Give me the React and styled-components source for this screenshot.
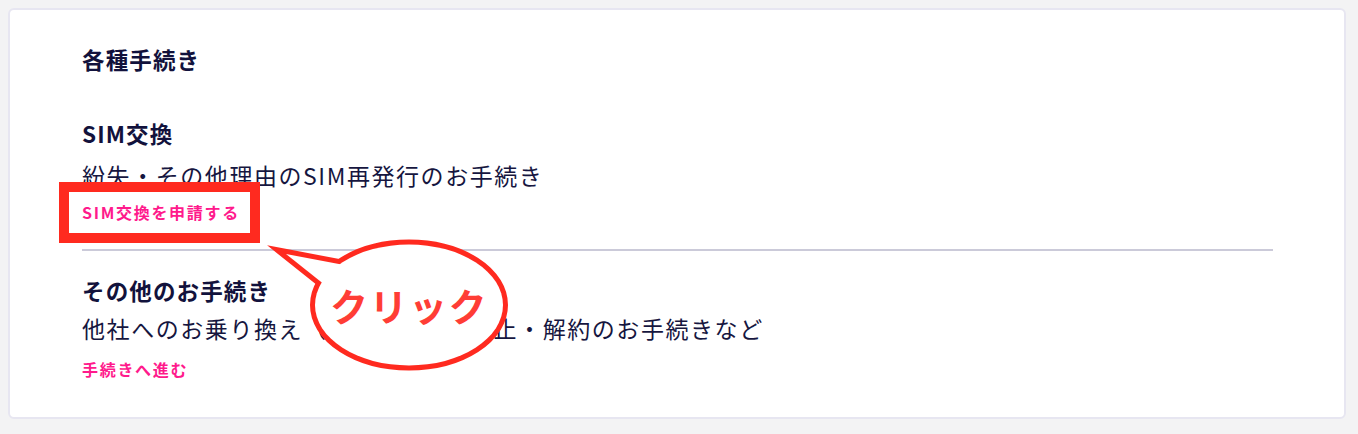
import React from "react";
import styled, { createGlobalStyle } from "styled-components";

const GlobalStyle = createGlobalStyle`
  html, body { margin: 0; padding: 0; }
  body {
    background: #f3f3f4;
    font-family: "Noto Sans CJK JP", "Noto Sans", sans-serif;
    color: #13133d;
  }
`;

const Page = styled.div`
  height: 434px;
  padding: 8px 12px 0 8px;
  box-sizing: border-box;
`;

const Card = styled.section`
  position: relative;
  height: 411px;
  box-sizing: border-box;
  background: #ffffff;
  border: 2px solid #e7e6f1;
  border-radius: 6px;
  padding: 34px 71px 0 72px;
`;

const Title = styled.h2`
  margin: 0;
  font-size: 22.5px;
  font-weight: 700;
  line-height: 31px;
  letter-spacing: 0.05em;
  color: #12123c;
`;

const Section = styled.div`
  margin-top: ${(p) => p.$top}px;
`;

const SectionTitle = styled.h3`
  margin: 0;
  font-size: 22.5px;
  font-weight: 700;
  line-height: 30px;
  letter-spacing: 0.05em;
  color: #12123c;
`;

const Desc = styled.p`
  margin: ${(p) => p.$gap}px 0 0;
  font-size: 23px;
  font-weight: 400;
  line-height: 36px;
  letter-spacing: 0.068em;
  color: #16163f;
`;

const Link = styled.a`
  display: block;
  margin-top: ${(p) => p.$gap}px;
  font-size: 16px;
  font-weight: 700;
  line-height: 24px;
  letter-spacing: 1.7px;
  color: #ff1a8c;
  text-decoration: none;
`;

const Divider = styled.hr`
  margin: 25px 0 0;
  border: 0;
  height: 2px;
  background: #cbcad9;
`;

const RedBox = styled.div`
  position: absolute;
  left: 49px;
  top: 172px;
  width: 201px;
  height: 61px;
  box-sizing: border-box;
  border: 10px solid #ff2a1f;
`;

const Bubble = styled.div`
  position: absolute;
  left: 250px;
  top: 225px;
  width: 255px;
  height: 140px;
`;

const BubbleSvg = styled.svg`
  display: block;
  width: 100%;
  height: 100%;
`;

const BubbleLabel = styled.span`
  position: absolute;
  left: 149px;
  top: 70px;
  transform: translate(-50%, -50%);
  white-space: nowrap;
  font-size: 38px;
  font-weight: 700;
  letter-spacing: 1.5px;
  line-height: 1;
  color: #ff3d35;
`;

const tail = "26,19 100,33 80,62";

export default function App() {
  return (
    <>
      <GlobalStyle />
      <Page>
        <Card>
          <Title>各種手続き</Title>
          <Section $top={43}>
            <SectionTitle>SIM交換</SectionTitle>
            <Desc $gap={9}>紛失・その他理由のSIM再発行のお手続き</Desc>
            <Link href="#" $gap={7}>SIM交換を申請する</Link>
          </Section>
          <Divider />
          <Section $top={24}>
            <SectionTitle>その他のお手続き</SectionTitle>
            <Desc $gap={5}>他社へのお乗り換え（MNP）・利用停止・解約のお手続きなど</Desc>
            <Link href="#" $gap={11}>手続きへ進む</Link>
          </Section>

          <RedBox />
          <Bubble>
            <BubbleSvg viewBox="0 0 255 140">
              <polygon points={tail} fill="#fff" stroke="#ff2a1f" strokeWidth="10" strokeLinejoin="miter" strokeMiterlimit="10" />
              <ellipse cx="149" cy="70" rx="94" ry="60.5" fill="#fff" stroke="#ff2a1f" strokeWidth="10" />
              <polygon points={tail} fill="#fff" />
              <ellipse cx="149" cy="70" rx="94" ry="60.5" fill="#fff" />
            </BubbleSvg>
            <BubbleLabel>クリック</BubbleLabel>
          </Bubble>
        </Card>
      </Page>
    </>
  );
}
